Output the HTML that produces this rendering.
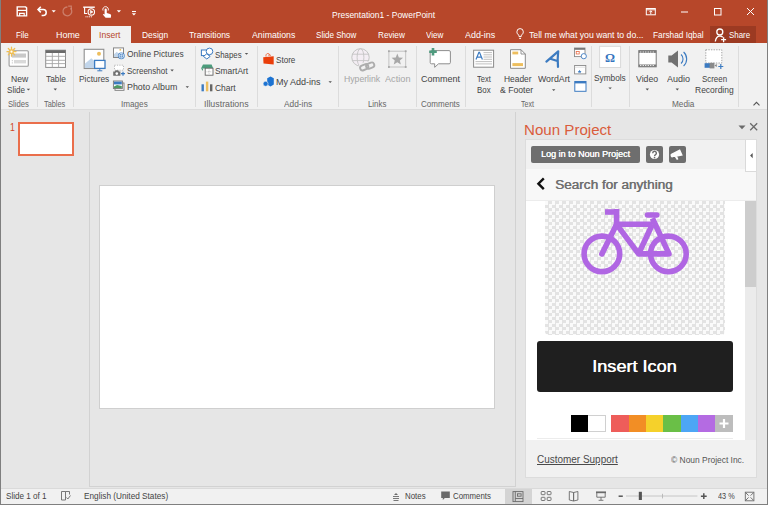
<!DOCTYPE html>
<html><head><meta charset="utf-8">
<style>
*{margin:0;padding:0;box-sizing:border-box}
html,body{width:768px;height:505px;overflow:hidden;background:#E6E6E6;font-family:"Liberation Sans",sans-serif}
.a{position:absolute}
.t{position:absolute;white-space:pre;transform-origin:0 0;font-family:"Liberation Sans",sans-serif}
svg{position:absolute;overflow:visible}
</style></head><body>
<!-- title + tabs -->
<div class="a" style="left:0;top:0;width:768px;height:43px;background:#B7472A"></div>
<div class="a" style="left:91px;top:26px;width:40px;height:17px;background:#F1F1F1"></div>
<div class="a" style="left:710px;top:26px;width:46px;height:17px;background:#9C3A22"></div>
<!-- ribbon -->
<div class="a" style="left:0;top:43px;width:768px;height:66px;background:#F1F1F1"></div>
<div class="a" style="left:0;top:109px;width:768px;height:1px;background:#DCDCDC"></div>
<!-- separators -->
<div class="a" style="left:37px;top:46px;width:1px;height:61px;background:#DCDCDC"></div>
<div class="a" style="left:73px;top:46px;width:1px;height:61px;background:#DCDCDC"></div>
<div class="a" style="left:195px;top:46px;width:1px;height:61px;background:#DCDCDC"></div>
<div class="a" style="left:257px;top:46px;width:1px;height:61px;background:#DCDCDC"></div>
<div class="a" style="left:338px;top:46px;width:1px;height:61px;background:#DCDCDC"></div>
<div class="a" style="left:416px;top:46px;width:1px;height:61px;background:#DCDCDC"></div>
<div class="a" style="left:465px;top:46px;width:1px;height:61px;background:#DCDCDC"></div>
<div class="a" style="left:591px;top:46px;width:1px;height:61px;background:#DCDCDC"></div>
<div class="a" style="left:629px;top:46px;width:1px;height:61px;background:#DCDCDC"></div>
<div class="a" style="left:738px;top:46px;width:1px;height:61px;background:#DCDCDC"></div>
<!-- main area -->
<div class="a" style="left:89px;top:112px;width:1px;height:375px;background:#D2D2D2"></div>
<div class="a" style="left:90px;top:486px;width:425px;height:1px;background:#D2D2D2"></div>
<div class="a" style="left:515px;top:112px;width:1px;height:375px;background:#D2D2D2"></div>
<!-- thumbnail -->
<div class="a" style="left:18px;top:122px;width:56px;height:34px;background:#fff;border:2px solid #EA6E4B"></div>
<!-- slide -->
<div class="a" style="left:99px;top:185px;width:396px;height:224px;background:#fff;border:1px solid #CFCFCF"></div>
<!-- noun panel -->
<div class="a" style="left:525px;top:139px;width:232px;height:339px;background:#F1F1F1;border:1px solid #DCDCDC"></div>
<div class="a" style="left:526px;top:169px;width:230px;height:32px;background:#F8F8F8;border-bottom:1px solid #ECECEC"></div>
<div class="a" style="left:526px;top:201px;width:219px;height:239px;background:#fff"></div>
<div class="a" style="left:745px;top:201px;width:11px;height:239px;background:#EBEBEB"></div>
<div class="a" style="left:745px;top:201px;width:11px;height:86px;background:#CDCDCD"></div>
<div class="a" style="left:745px;top:140px;width:11px;height:32px;background:#fff;border-left:1px solid #DADADA;border-bottom:1px solid #DADADA"></div>
<!-- checker -->
<div class="a" style="left:545px;top:201px;width:180px;height:134px;border-radius:0 0 4px 4px;background:repeating-conic-gradient(#E3E3E3 0 25%,#FAFAFA 0 50%) 0 0/7px 7px"></div>
<!-- insert button -->
<div class="a" style="left:537px;top:341px;width:196px;height:51px;background:#1F1F1F;border-radius:3px"></div>
<!-- login buttons -->
<div class="a" style="left:531px;top:146px;width:109px;height:17px;background:#6E6E6E;border-radius:2px"></div>
<div class="a" style="left:646px;top:146px;width:17px;height:17px;background:#6E6E6E;border-radius:2px"></div>
<div class="a" style="left:669px;top:146px;width:17px;height:17px;background:#6E6E6E;border-radius:2px"></div>
<!-- swatches -->
<div class="a" style="left:571px;top:415px;width:17px;height:17px;background:#000"></div>
<div class="a" style="left:588px;top:415px;width:18px;height:17px;background:#fff;border:1px solid #D0D0D0;border-left:none"></div>
<div class="a" style="left:611px;top:415px;width:18px;height:17px;background:#EE5D5A"></div>
<div class="a" style="left:629px;top:415px;width:17px;height:17px;background:#F28E25"></div>
<div class="a" style="left:646px;top:415px;width:17px;height:17px;background:#F5D12B"></div>
<div class="a" style="left:663px;top:415px;width:18px;height:17px;background:#6ABF47"></div>
<div class="a" style="left:681px;top:415px;width:17px;height:17px;background:#4DA6F5"></div>
<div class="a" style="left:698px;top:415px;width:17px;height:17px;background:#B46BE2"></div>
<div class="a" style="left:715px;top:415px;width:18px;height:17px;background:#BDBDBD"></div>
<div class="a" style="left:537px;top:438px;width:196px;height:1px;background:#ECECEC"></div>
<!-- status bar -->
<div class="a" style="left:0;top:488px;width:768px;height:17px;background:#F1F1F1;border-top:1px solid #DADADA"></div>
<div class="a" style="left:505px;top:489px;width:27px;height:15px;background:#D4D4D4"></div>
<div class="a" style="left:0;top:504px;width:768px;height:1px;background:#7F7F7F"></div>
<!-- window borders -->
<div class="a" style="left:0;top:0;width:1px;height:505px;background:#7F7F7F"></div>
<div class="a" style="left:767px;top:0;width:1px;height:505px;background:#7F7F7F"></div>
<svg width="768" height="505" viewBox="0 0 768 505" style="left:0;top:0">
<!-- ===== QAT ===== -->
<g fill="none" stroke="#fff" stroke-width="1.1">
  <!-- save -->
  <path d="M17.2 6.9h8.4l1 1v8h-9.4z" stroke-width="1.4"/>
  <path d="M17.2 10.4h9.4" stroke-width="1.2"/>
  <path d="M19.6 15.9v-2.6h4.6v2.6" stroke-width="1.2"/>
  <!-- undo -->
  <path d="M38 9.6h5.2a3 3 0 0 1 0 6h-1.6" stroke-width="1.5"/>
  <path d="M40.8 6.8L38 9.6l2.8 2.8" stroke-width="1.5"/>
  <!-- redo dim -->
  <path d="M70.6 8.4a4.4 4.4 0 1 1-3.2-1.4" stroke="rgba(255,255,255,.3)" stroke-width="1.3"/>
  <path d="M68.2 6.2h3.1v3" stroke="rgba(255,255,255,.3)" stroke-width="1.2"/>
  <!-- presenter -->
  <path d="M83.2 7.2h11.6" stroke-width="1.4"/>
  <path d="M84.6 7.2v6.3h2.6" stroke-width="1.1"/>
  <circle cx="91.3" cy="11.9" r="3.2" stroke-width="1.1"/>
  <path d="M90.4 10.3v3.2l2.6-1.6z" fill="#fff" stroke-width="0.6"/>
  <path d="M85.5 16.8h7" stroke-width="1" stroke-dasharray="1 .8"/>
  <!-- customize -->
  <path d="M132 11.5h4"/>
</g>
<g fill="#fff">
  <path d="M51.6 10.2h4.2l-2.1 2.3z"/>
  <path d="M116.8 10.2h4.2l-2.1 2.3z"/>
  <path d="M131.8 13.2h4.2l-2.1 2.3z"/>
  <!-- touch hand -->
  <path d="M104.6 9.6a1.1 1.1 0 0 1 2.2 0v3.4l3.2 1.1c.8.3 1.2.9 1.1 1.7l-.3 2h-5.2l-2.8-3.2.9-.7 .9.5z"/>
</g>
<g fill="none" stroke="#fff" stroke-width="0.9">
  <path d="M103 10.5a2.8 2.8 0 1 1 5.2 0" />
</g>
<!-- ===== window controls ===== -->
<g fill="none" stroke="#fff" stroke-width="1">
  <rect x="646.3" y="8.5" width="9" height="6.3"/>
  <path d="M646.3 9.8h9" />
  <path d="M650.8 14.3v-3.4M649.3 12.2l1.5-1.5 1.5 1.5"/>
  <path d="M681 12h7"/>
  <rect x="714.5" y="8.5" width="6.5" height="6.5"/>
  <path d="M747 8l7 7M754 8l-7 7"/>
</g>
<!-- share person -->
<g fill="none" stroke="#fff" stroke-width="1">
  <circle cx="719.8" cy="32" r="3" stroke-width="1.3"/>
  <path d="M715.3 41.5c.6-3.6 2.2-5.3 4.5-5.3 1.3 0 2.3.4 3 1.1" stroke-width="1.3"/>
  <path d="M723.6 37.2v5M721.1 39.7h5" stroke-width="1.3"/>
</g>
<!-- lightbulb -->
<g fill="none" stroke="#fff" stroke-width="1">
  <path d="M519 36.6v-1.2c-1.3-.9-2.1-2.1-2.1-3.6a3.2 3.2 0 0 1 6.4 0c0 1.5-.8 2.7-2.1 3.6v1.2z"/>
  <path d="M519.2 38.4h1.8"/>
</g>

<!-- ===== RIBBON ===== -->
<!-- New slide -->
<rect x="9.1" y="50.7" width="19.2" height="15.5" rx="1" fill="#fff" stroke="#9A9A9A" stroke-width="1.1"/>
<rect x="11.8" y="53.5" width="14.2" height="4.1" fill="#C9C9C9"/>
<rect x="14" y="60" width="12" height="3.4" fill="#D9D9D9"/>
<rect x="11.8" y="60.2" width="1" height="1" fill="#bbb"/><rect x="11.8" y="62.4" width="1" height="1" fill="#bbb"/>
<g stroke="#F0BF54" stroke-width="1.3" stroke-linecap="round">
  <path d="M11.5 47.2v9M7 51.7h9M8.3 48.5l6.4 6.4M14.7 48.5l-6.4 6.4"/>
</g>
<circle cx="11.5" cy="51.7" r="2.4" fill="#F0BF54"/>
<circle cx="11.5" cy="51.7" r="1.1" fill="#fff"/>
<!-- Table -->
<rect x="45.7" y="50.2" width="19.8" height="17.2" fill="#fff" stroke="#8E8E8E" stroke-width="1"/>
<rect x="45.7" y="50.2" width="19.8" height="2.8" fill="#6A6A6A"/>
<g stroke="#A5A5A5" stroke-width="0.9">
  <path d="M52.3 53v14.4M58.6 53v14.4M45.7 56.3h19.8M45.7 60.3h19.8M45.7 63.6h19.8"/>
</g>
<!-- Pictures -->
<rect x="84.2" y="49.3" width="19.6" height="19.2" fill="#fff" stroke="#8E8E8E" stroke-width="1.1"/>
<path d="M84.8 67.9V63.8l6.5-5.5 3.3 3v6.6z" fill="#C1D5EA"/>
<circle cx="99" cy="53.8" r="2" fill="#EDBE5E"/>
<rect x="94.6" y="60.4" width="10.4" height="8" fill="#fff" stroke="#3C7BC1" stroke-width="1.3"/>
<path d="M99.8 68.4v2.2M97.3 70.8h5" stroke="#3C7BC1" stroke-width="1"/>
<!-- Online pictures -->
<rect x="113.5" y="47.9" width="10" height="9.6" fill="#fff" stroke="#888" stroke-width="1"/>
<path d="M114 57v-2.8l2.8-2.5 2 2V57z" fill="#C1D5EA"/>
<rect x="119.5" y="49" width="1.6" height="1.6" fill="#EDBE5E"/>
<circle cx="121.3" cy="55.8" r="3.4" fill="#3C7BC1"/>
<circle cx="121.3" cy="55.8" r="2.4" fill="none" stroke="#fff" stroke-width="0.7"/>
<path d="M118.9 55.8h4.8M121.3 53.4v4.8" stroke="#fff" stroke-width="0.6"/>
<!-- Screenshot -->
<rect x="114.5" y="65.2" width="9" height="5" fill="#fff" stroke="#AAA" stroke-width="0.8" stroke-dasharray="1.2 1.2"/>
<path d="M113.2 71.5h1.6l.8-1.2h2.6l.8 1.2h1.4v4.3h-7.2z" fill="#707070"/>
<circle cx="116.8" cy="73.6" r="1.3" fill="#fff"/>
<path d="M121 73.7h4M123 71.7v4" stroke="#3C7BC1" stroke-width="1.2"/>
<!-- Photo album -->
<rect x="115" y="83" width="9" height="7.3" fill="#fff" stroke="#777" stroke-width="0.9"/>
<rect x="113.4" y="81" width="9" height="7.5" fill="#fff" stroke="#777" stroke-width="0.9"/>
<rect x="114" y="81.6" width="7.8" height="2.8" fill="#3C7BC1"/>
<path d="M114 86.5l3-1.6 4.8 1v2h-7.8z" fill="#4E9A62"/>
<!-- Shapes -->
<g fill="#fff" stroke="#3C7BC1" stroke-width="1">
  <rect x="201.4" y="50" width="7.4" height="5.6"/>
  <circle cx="209.5" cy="51.4" r="3.3"/>
  <path d="M206.8 53.8l3.4 2.6-3.4 2.6-3.4-2.6z"/>
</g>
<!-- SmartArt -->
<path d="M201 68.4l2-4h8.6l1.6 4z" fill="#4C9C7C"/>
<path d="M201 68.4l2 2.6v-2.6z" fill="#4C9C7C"/>
<rect x="205.2" y="68.2" width="7.8" height="7" fill="#fff" stroke="#666" stroke-width="0.9"/>
<path d="M209.1 69.6v4.4M206.6 71.8h5" stroke="#999" stroke-width="0.7" stroke-dasharray="0.8 0.8"/>
<!-- Chart -->
<rect x="201.5" y="84.3" width="2.4" height="7" fill="#3C7BC1"/>
<rect x="205.9" y="81.6" width="2.4" height="9.7" fill="#EDBE5E"/>
<rect x="210" y="84.3" width="2.4" height="7" fill="#666"/>
<!-- Store -->
<path d="M263.2 57.3l10.5-1.1v8.4l-10.2-1.2z" fill="#EA3E0A"/>
<path d="M266 56.6c-.3-1.6.4-2.9 1.6-3.1s2.3.7 2.6 2.3M268 55.5c.6-.7 1.6-.8 2.4-.1" fill="none" stroke="#EE6A40" stroke-width="1"/>
<!-- My add-ins -->
<path d="M270.5 76.4l3.3 1.8v6.4l-3.3 1.8-3.3-1.8v-6.4z" fill="#1C73D2"/>
<circle cx="265.6" cy="83.8" r="2.5" fill="#1C73D2"/>
<circle cx="265.6" cy="83.8" r="2.5" fill="none" stroke="#F1F1F1" stroke-width=".6"/>
<!-- Hyperlink -->
<circle cx="360.5" cy="57.4" r="8.7" fill="#F4EEF4" stroke="#C4C4C4" stroke-width="1"/>
<g fill="none" stroke="#C4C4C4" stroke-width="0.9">
  <ellipse cx="360.5" cy="57.4" rx="3.4" ry="8.7"/>
  <path d="M352 54.2h17M352 60.6h17"/>
</g>
<g fill="none" stroke="#F1F1F1" stroke-width="4">
  <rect x="-4.2" y="-2.5" width="8.4" height="5" rx="2.5" transform="translate(364.2 67.3) rotate(-22)"/>
  <rect x="-4.2" y="-2.5" width="8.4" height="5" rx="2.5" transform="translate(370.2 65.6) rotate(-22)"/>
</g>
<g fill="none" stroke="#ADADAD" stroke-width="1.9">
  <rect x="-4.2" y="-2.5" width="8.4" height="5" rx="2.5" transform="translate(364.2 67.3) rotate(-22)"/>
  <rect x="-4.2" y="-2.5" width="8.4" height="5" rx="2.5" transform="translate(370.2 65.6) rotate(-22)"/>
</g>
<!-- Action -->
<rect x="388.9" y="51.2" width="16.8" height="15.8" fill="none" stroke="#BDBDBD" stroke-width="0.9"/>
<g fill="#A8A8A8">
  <rect x="388" y="50.3" width="1.8" height="1.8"/><rect x="404.8" y="50.3" width="1.8" height="1.8"/>
  <rect x="388" y="66.1" width="1.8" height="1.8"/><rect x="404.8" y="66.1" width="1.8" height="1.8"/>
  <path d="M397.3 53.5l1.55 3.9 4.2.3-3.2 2.7 1 4.1-3.55-2.2-3.55 2.2 1-4.1-3.2-2.7 4.2-.3z"/>
</g>
<!-- Comment -->
<path d="M431.5 50.6h17.6a1.3 1.3 0 0 1 1.3 1.3v10.6a1.3 1.3 0 0 1-1.3 1.3h-10.6l-3.8 3.5v-3.5h-3.2a1.3 1.3 0 0 1-1.3-1.3V51.9a1.3 1.3 0 0 1 1.3-1.3z" fill="#fff" stroke="#8E8E8E" stroke-width="1"/>
<path d="M433 48v7.6M429.2 51.8h7.6" stroke="#4E9A7E" stroke-width="2.6"/>
<!-- Text box -->
<rect x="473.6" y="50.2" width="20" height="17" fill="#fff" stroke="#8A8A8A" stroke-width="1"/>
<path d="M476 59.5l2.9-7.2h.6l2.9 7.2M477.1 57.2h4.2" fill="none" stroke="#3C7BC1" stroke-width="1.2"/>
<g stroke="#B0B0B0" stroke-width="0.8"><path d="M483.5 52.6h8.5M483.5 54.8h8.5M483.5 57h8.5M483.5 59.3h8.5M475.5 61.6h16.5M475.5 63.9h16.5"/></g>
<!-- Header footer -->
<path d="M510.5 49.7h10.5l4.3 4.3v14.3h-14.8z" fill="#fff" stroke="#8A8A8A" stroke-width="1"/>
<path d="M521 49.7v4.3h4.3" fill="none" stroke="#8A8A8A" stroke-width="0.9"/>
<rect x="512.4" y="51.6" width="5.8" height="2.8" fill="#EDBE5E"/>
<rect x="512.4" y="63.1" width="10.6" height="3" fill="#EDBE5E"/>
<!-- WordArt -->
<path d="M546.4 61.6L558.2 51.3Q557.3 59 558 66.8M550.3 58.8L557.4 61" fill="none" stroke="#3C7BC1" stroke-width="2.2" stroke-linecap="round" stroke-linejoin="round"/>
<!-- small text icons -->
<rect x="574.5" y="48" width="10.5" height="8.6" fill="#fff" stroke="#8A8A8A" stroke-width="0.9"/>
<rect x="574.5" y="48" width="10.5" height="1.8" fill="#777"/>
<rect x="576.2" y="51.5" width="3" height="2.5" fill="none" stroke="#E86A42" stroke-width="0.8"/>
<circle cx="583.8" cy="56.2" r="2.6" fill="#fff" stroke="#3C7BC1" stroke-width="0.9"/>
<rect x="574.6" y="65.5" width="11.2" height="8.4" fill="#fff" stroke="#8A8A8A" stroke-width="0.9"/>
<path d="M574.6 67.2h11.2" stroke="#ccc" stroke-width=".6"/>
<path d="M579.6 69.8l.6 1.3h1.3l-1 .8.4 1.3-1.3-.8-1.3.8.4-1.3-1-.8h1.3z" fill="#3C7BC1"/>
<rect x="574.8" y="81.5" width="11.2" height="9.8" fill="#fff" stroke="#3C7BC1" stroke-width="1"/>
<rect x="574.8" y="81.5" width="11.2" height="1.9" fill="#3C7BC1"/>
<!-- Symbols -->
<rect x="599.6" y="46.3" width="21" height="21.2" fill="#fff" stroke="#D9D9D9" stroke-width="1"/>
<text x="610.1" y="61.6" text-anchor="middle" font-family="Liberation Serif" font-size="12.5" font-weight="700" fill="#3474BE">&#937;</text>
<!-- Video -->
<rect x="638.8" y="50.6" width="17.4" height="16.2" fill="#fff" stroke="#7A7A7A" stroke-width="1"/>
<rect x="638.8" y="50.6" width="17.4" height="2.3" fill="#7A7A7A"/>
<rect x="638.8" y="64.5" width="17.4" height="2.3" fill="#7A7A7A"/>
<g fill="#fff"><path d="M640.2 51.5h1.1v.9h-1.1zM642.7 51.5h1.1v.9h-1.1zM645.2 51.5h1.1v.9h-1.1zM647.7 51.5h1.1v.9h-1.1zM650.2 51.5h1.1v.9h-1.1zM652.7 51.5h1.1v.9h-1.1z"/>
<path d="M640.2 65.1h1.1v.9h-1.1zM642.7 65.1h1.1v.9h-1.1zM645.2 65.1h1.1v.9h-1.1zM647.7 65.1h1.1v.9h-1.1zM650.2 65.1h1.1v.9h-1.1zM652.7 65.1h1.1v.9h-1.1z"/></g>
<!-- Audio -->
<path d="M668.3 55.5h3.3l6.4-5v17l-6.4-5h-3.3z" fill="#717171"/>
<g fill="none" stroke="#3C7BC1" stroke-width="1.1"><path d="M681 54.5a6 6 0 0 1 0 9"/><path d="M683.6 52a9.5 9.5 0 0 1 0 14"/></g>
<!-- Screen recording -->
<rect x="705.8" y="49.8" width="16" height="13.2" fill="#fff" stroke="#9A9A9A" stroke-width="0.9" stroke-dasharray="1.3 1.3"/>
<rect x="704.6" y="63.2" width="5.6" height="4.6" fill="#3C7BC1"/>
<rect x="709.6" y="62.8" width="4.8" height="5.6" fill="#8A8A8A"/>
<path d="M714.4 65.5l2.4-1.6v3.2z" fill="#8A8A8A"/>
<path d="M718.3 66.5h5M720.8 64v5" stroke="#3C7BC1" stroke-width="1.2"/>
<!-- dropdown arrows in ribbon -->
<g fill="#555">
  <path d="M26.7 88.7h3.4l-1.7 1.8z"/>
  <path d="M53.6 88.6h3.4l-1.7 1.8z"/>
  <path d="M170.4 69.6h3.4l-1.7 1.8z"/>
  <path d="M185.6 86.3h3.4l-1.7 1.8z"/>
  <path d="M244.8 53h3.4l-1.7 1.8z"/>
  <path d="M328.5 81.2h3.4l-1.7 1.8z"/>
  <path d="M552 89.2h3.4l-1.7 1.8z"/>
  <path d="M608.4 87.4h3.4l-1.7 1.8z"/>
  <path d="M645.6 88.6h3.4l-1.7 1.8z"/>
  <path d="M675.6 88.6h3.4l-1.7 1.8z"/>
</g>
<path d="M753.5 105.3l3-3 3 3" fill="none" stroke="#555" stroke-width="1.1"/>

<!-- ===== Noun pane ===== -->
<path d="M738.5 125.5h7l-3.5 3.8z" fill="#6A6A6A"/>
<path d="M750.2 123.3l7 7M757.2 123.3l-7 7" stroke="#6A6A6A" stroke-width="1.3"/>
<path d="M752.7 153l-2.6 2.6 2.6 2.6z" fill="#555"/>
<!-- help / megaphone -->
<circle cx="654.5" cy="154.5" r="4.6" fill="#fff"/>
<path d="M652.7 153.2a1.85 1.85 0 1 1 2.8 1.5c-.7.4-.95.8-.95 1.5" fill="none" stroke="#6E6E6E" stroke-width="1.4"/><rect x="653.8" y="157" width="1.5" height="1.4" fill="#6E6E6E"/>
<path d="M671.6 153.6l1.6-.8 6.8-3.6 2.8 6.3-7.6 1.4-1.9.2a1.8 1.8 0 0 1-1.7-3.5z" fill="#fff"/>
<path d="M674.6 156.6l2.3 3.3 1.5-.7-1.3-3z" fill="#fff"/>
<!-- chevron -->
<path d="M543.8 178.3l-5.4 5.4 5.4 5.4" fill="none" stroke="#111" stroke-width="2.4"/>
<!-- bicycle -->
<g fill="none" stroke="#B066E3" stroke-width="5.6" stroke-linejoin="round">
  <circle cx="601.9" cy="253.9" r="17.8"/>
  <circle cx="668.4" cy="253.9" r="17.8"/>
  <path d="M616.6 209v15.3h35.6"/>
  <path d="M616.6 224.3l22 29.6h30.4l-16.6-35.7"/>
  <path d="M638.6 253.9l13.8-29.6"/>
  <path d="M616.6 224.3l-14.7 29.6" stroke-linecap="round"/>
  <path d="M605 212h12"/>
  <path d="M647.5 215h9.3" stroke-linecap="round"/>
</g>
<!-- plus in swatch -->
<path d="M719.5 423.5h9M724 419v9" stroke="#fff" stroke-width="2.2"/>

<!-- ===== Status bar icons ===== -->
<g fill="none" stroke="#6A6A6A" stroke-width="0.9">
  <!-- spell -->
  <path d="M61.5 491.5h4v8.5h-4zM65.5 491.5h4v3"/>
  <path d="M66.5 497.5l1.3 1.5 2.7-3.5"/>
  <!-- normal view -->
  <rect x="513" y="491.6" width="10" height="10"/>
  <path d="M515.3 491.6v10M515.3 498.5h7.7"/>
  <rect x="517.5" y="493.8" width="3.6" height="2.4"/>
  <!-- sorter -->
  <rect x="541.2" y="491.5" width="3.8" height="3.2" rx=".6"/><rect x="547.2" y="491.5" width="3.8" height="3.2" rx=".6"/>
  <rect x="541.2" y="497.3" width="3.8" height="3.2" rx=".6"/><rect x="547.2" y="497.3" width="3.8" height="3.2" rx=".6"/>
  <!-- reading -->
  <path d="M569.3 491.5l4.3 1v8.5l-4.3-1zM577.9 491.5l-4.3 1v8.5l4.3-1z"/>
  <!-- slideshow -->
  <path d="M596 492.2h10M596.8 492.2v5h8.4v-5M601 497.2v2.8M598.6 500.3h4.8"/><path d="M596 492.4h10" stroke-width="1.6"/>
  <!-- fit -->
  <rect x="745.3" y="492.2" width="8.6" height="8.6"/>
  <path d="M746 493l2.6 2.6M753.2 493l-2.6 2.6M746 500l2.6-2.6M753.2 500l-2.6-2.6"/>
  <!-- notes -->
  <path d="M393 496.5h6M393 498.5h6M393.5 500.5h5"/>
</g>
<path d="M394 495l2-2 2 2z" fill="#6A6A6A"/>
<path d="M441.2 491.5h8.6v6.5h-5l-2 2v-2h-1.6z" fill="#6A6A6A"/>
<!-- zoom slider -->
<path d="M618.6 496.2h4.2" stroke="#555" stroke-width="1.5"/>
<path d="M626 496h71.4" stroke="#C6C6C6" stroke-width="1"/>
<path d="M662.5 493.8v4.6" stroke="#B0B0B0" stroke-width="0.8"/>
<rect x="638.8" y="491.8" width="3.1" height="8.2" fill="#555"/>
<path d="M700.9 496.2h5.8M703.8 493.3v5.8" stroke="#555" stroke-width="1.5"/>
</svg>

<div class="t" style="left:331.80px;top:9.66px;font-size:9.5px;line-height:9.5px;color:#fff;font-weight:400;transform:scaleX(0.891);">Presentation1 - PowerPoint</div>
<div class="t" style="left:15.70px;top:30.16px;font-size:9.5px;line-height:9.5px;color:#fff;font-weight:400;transform:scaleX(0.833);">File</div>
<div class="t" style="left:55.80px;top:30.16px;font-size:9.5px;line-height:9.5px;color:#fff;font-weight:400;transform:scaleX(0.940);">Home</div>
<div class="t" style="left:99.40px;top:30.16px;font-size:9.5px;line-height:9.5px;color:#B7472A;font-weight:400;transform:scaleX(0.904);">Insert</div>
<div class="t" style="left:142.30px;top:30.16px;font-size:9.5px;line-height:9.5px;color:#fff;font-weight:400;transform:scaleX(0.886);">Design</div>
<div class="t" style="left:189.10px;top:30.16px;font-size:9.5px;line-height:9.5px;color:#fff;font-weight:400;transform:scaleX(0.891);">Transitions</div>
<div class="t" style="left:251.60px;top:30.16px;font-size:9.5px;line-height:9.5px;color:#fff;font-weight:400;transform:scaleX(0.921);">Animations</div>
<div class="t" style="left:316.00px;top:30.16px;font-size:9.5px;line-height:9.5px;color:#fff;font-weight:400;transform:scaleX(0.850);">Slide Show</div>
<div class="t" style="left:378.30px;top:30.16px;font-size:9.5px;line-height:9.5px;color:#fff;font-weight:400;transform:scaleX(0.861);">Review</div>
<div class="t" style="left:425.80px;top:30.16px;font-size:9.5px;line-height:9.5px;color:#fff;font-weight:400;transform:scaleX(0.852);">View</div>
<div class="t" style="left:464.80px;top:30.16px;font-size:9.5px;line-height:9.5px;color:#fff;font-weight:400;transform:scaleX(0.938);">Add-ins</div>
<div class="t" style="left:528.60px;top:30.16px;font-size:9.5px;line-height:9.5px;color:#fff;font-weight:400;transform:scaleX(0.915);">Tell me what you want to do...</div>
<div class="t" style="left:652.50px;top:30.16px;font-size:9.5px;line-height:9.5px;color:#fff;font-weight:400;transform:scaleX(0.871);">Farshad Iqbal</div>
<div class="t" style="left:729.00px;top:30.16px;font-size:9.5px;line-height:9.5px;color:#fff;font-weight:400;transform:scaleX(0.832);">Share</div>
<div class="t" style="left:10.60px;top:73.86px;font-size:9.5px;line-height:9.5px;color:#444444;font-weight:400;transform:scaleX(0.905);">New</div>
<div class="t" style="left:6.60px;top:85.06px;font-size:9.5px;line-height:9.5px;color:#444444;font-weight:400;transform:scaleX(0.852);">Slide</div>
<div class="t" style="left:8.20px;top:98.76px;font-size:9.5px;line-height:9.5px;color:#666666;font-weight:400;transform:scaleX(0.808);">Slides</div>
<div class="t" style="left:45.80px;top:73.86px;font-size:9.5px;line-height:9.5px;color:#444444;font-weight:400;transform:scaleX(0.874);">Table</div>
<div class="t" style="left:44.20px;top:98.76px;font-size:9.5px;line-height:9.5px;color:#666666;font-weight:400;transform:scaleX(0.775);">Tables</div>
<div class="t" style="left:78.70px;top:73.66px;font-size:9.5px;line-height:9.5px;color:#444444;font-weight:400;transform:scaleX(0.882);">Pictures</div>
<div class="t" style="left:127.40px;top:49.11px;font-size:9.5px;line-height:9.5px;color:#444444;font-weight:400;transform:scaleX(0.880);">Online Pictures</div>
<div class="t" style="left:127.40px;top:65.86px;font-size:9.5px;line-height:9.5px;color:#444444;font-weight:400;transform:scaleX(0.841);">Screenshot</div>
<div class="t" style="left:127.40px;top:82.26px;font-size:9.5px;line-height:9.5px;color:#444444;font-weight:400;transform:scaleX(0.935);">Photo Album</div>
<div class="t" style="left:120.84px;top:98.66px;font-size:9.5px;line-height:9.5px;color:#666666;font-weight:400;transform:scaleX(0.857);">Images</div>
<div class="t" style="left:215.40px;top:49.96px;font-size:9.5px;line-height:9.5px;color:#444444;font-weight:400;transform:scaleX(0.825);">Shapes</div>
<div class="t" style="left:215.40px;top:66.26px;font-size:9.5px;line-height:9.5px;color:#444444;font-weight:400;transform:scaleX(0.884);">SmartArt</div>
<div class="t" style="left:215.40px;top:82.86px;font-size:9.5px;line-height:9.5px;color:#444444;font-weight:400;transform:scaleX(0.891);">Chart</div>
<div class="t" style="left:203.67px;top:98.56px;font-size:9.5px;line-height:9.5px;color:#666666;font-weight:400;transform:scaleX(0.928);">Illustrations</div>
<div class="t" style="left:276.30px;top:55.26px;font-size:9.5px;line-height:9.5px;color:#444444;font-weight:400;transform:scaleX(0.852);">Store</div>
<div class="t" style="left:276.30px;top:77.36px;font-size:9.5px;line-height:9.5px;color:#444444;font-weight:400;transform:scaleX(0.949);">My Add-ins</div>
<div class="t" style="left:284.10px;top:98.56px;font-size:9.5px;line-height:9.5px;color:#666666;font-weight:400;transform:scaleX(0.875);">Add-ins</div>
<div class="t" style="left:343.70px;top:73.96px;font-size:9.5px;line-height:9.5px;color:#A6A6A6;font-weight:400;transform:scaleX(0.912);">Hyperlink</div>
<div class="t" style="left:384.60px;top:73.96px;font-size:9.5px;line-height:9.5px;color:#A6A6A6;font-weight:400;transform:scaleX(0.965);">Action</div>
<div class="t" style="left:368.20px;top:98.86px;font-size:9.5px;line-height:9.5px;color:#666666;font-weight:400;transform:scaleX(0.827);">Links</div>
<div class="t" style="left:421.00px;top:73.96px;font-size:9.5px;line-height:9.5px;color:#444444;font-weight:400;transform:scaleX(0.949);">Comment</div>
<div class="t" style="left:421.00px;top:98.86px;font-size:9.5px;line-height:9.5px;color:#666666;font-weight:400;transform:scaleX(0.846);">Comments</div>
<div class="t" style="left:476.60px;top:73.96px;font-size:9.5px;line-height:9.5px;color:#444444;font-weight:400;transform:scaleX(0.789);">Text</div>
<div class="t" style="left:477.00px;top:84.96px;font-size:9.5px;line-height:9.5px;color:#444444;font-weight:400;transform:scaleX(0.831);">Box</div>
<div class="t" style="left:503.90px;top:73.96px;font-size:9.5px;line-height:9.5px;color:#444444;font-weight:400;transform:scaleX(0.884);">Header</div>
<div class="t" style="left:500.30px;top:84.96px;font-size:9.5px;line-height:9.5px;color:#444444;font-weight:400;transform:scaleX(0.911);">&amp; Footer</div>
<div class="t" style="left:537.60px;top:73.96px;font-size:9.5px;line-height:9.5px;color:#444444;font-weight:400;transform:scaleX(0.923);">WordArt</div>
<div class="t" style="left:521.20px;top:98.86px;font-size:9.5px;line-height:9.5px;color:#666666;font-weight:400;transform:scaleX(0.739);">Text</div>
<div class="t" style="left:594.20px;top:72.56px;font-size:9.5px;line-height:9.5px;color:#444444;font-weight:400;transform:scaleX(0.870);">Symbols</div>
<div class="t" style="left:636.40px;top:73.56px;font-size:9.5px;line-height:9.5px;color:#444444;font-weight:400;transform:scaleX(0.917);">Video</div>
<div class="t" style="left:666.50px;top:73.56px;font-size:9.5px;line-height:9.5px;color:#444444;font-weight:400;transform:scaleX(0.946);">Audio</div>
<div class="t" style="left:701.70px;top:73.56px;font-size:9.5px;line-height:9.5px;color:#444444;font-weight:400;transform:scaleX(0.833);">Screen</div>
<div class="t" style="left:694.80px;top:85.16px;font-size:9.5px;line-height:9.5px;color:#444444;font-weight:400;transform:scaleX(0.893);">Recording</div>
<div class="t" style="left:672.30px;top:98.86px;font-size:9.5px;line-height:9.5px;color:#666666;font-weight:400;transform:scaleX(0.865);">Media</div>
<div class="t" style="left:9.62px;top:123.44px;font-size:10px;line-height:10px;color:#D24726;font-weight:400;transform:scaleX(0.875);">1</div>
<div class="t" style="left:523.69px;top:122.40px;font-size:15px;line-height:15px;color:#DA5C3C;font-weight:400;transform:scaleX(1.007);">Noun Project</div>
<div class="t" style="left:540.80px;top:150.48px;font-size:9px;line-height:9px;color:#fff;font-weight:400;transform:scaleX(0.998);text-shadow:0.35px 0 0 #fff;">Log in to Noun Project</div>
<div class="t" style="left:555.22px;top:178.72px;font-size:12.5px;line-height:12.5px;color:#707070;font-weight:400;transform:scaleX(1.084);text-shadow:0.45px 0 0 #707070;">Search for anything</div>
<div class="t" style="left:592.23px;top:357.51px;font-size:17px;line-height:17px;color:#fff;font-weight:400;transform:scaleX(1.065);text-shadow:0.45px 0 0 #fff;">Insert Icon</div>
<div class="t" style="left:537.20px;top:455.24px;font-size:10px;line-height:10px;color:#4A4A4A;font-weight:400;transform:scaleX(0.996);text-decoration:underline;text-underline-offset:0.5px;">Customer Support</div>
<div class="t" style="left:671.00px;top:456.08px;font-size:9px;line-height:9px;color:#555;font-weight:400;transform:scaleX(0.936);">© Noun Project Inc.</div>
<div class="t" style="left:5.90px;top:491.98px;font-size:9px;line-height:9px;color:#444;font-weight:400;transform:scaleX(0.902);">Slide 1 of 1</div>
<div class="t" style="left:83.90px;top:491.98px;font-size:9px;line-height:9px;color:#444;font-weight:400;transform:scaleX(0.914);">English (United States)</div>
<div class="t" style="left:404.60px;top:491.98px;font-size:9px;line-height:9px;color:#444;font-weight:400;transform:scaleX(0.875);">Notes</div>
<div class="t" style="left:452.90px;top:491.98px;font-size:9px;line-height:9px;color:#444;font-weight:400;transform:scaleX(0.870);">Comments</div>
<div class="t" style="left:718.00px;top:491.98px;font-size:9px;line-height:9px;color:#444;font-weight:400;transform:scaleX(0.810);">43 %</div>
</body></html>
